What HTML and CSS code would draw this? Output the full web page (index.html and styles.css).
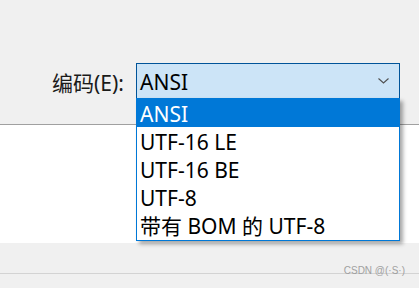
FILE: index.html
```html
<!DOCTYPE html>
<html>
	<head>
		<title>编码</title>
		<link rel="stylesheet" href="styles.css">
	</head>
	<body>
		<div class="panel">
			<div class="field">
				<label class="label">编码(E):</label>
				<div class="combo">
					<span class="combo-value">ANSI</span>
					<svg class="chevron" width="11" height="6" viewBox="0 0 11 6">
						<polyline points="0.5,0.5 5.5,5 10.5,0.5" fill="none" stroke="#505050" stroke-width="1.1"/>
					</svg>
				</div>
			</div>
		</div>
		<div class="content"></div>
		<div class="footer">
			<div class="footer-line"></div>
		</div>

		<ul class="list">
			<li class="selected">ANSI</li>
			<li>UTF-16 LE</li>
			<li>UTF-16 BE</li>
			<li>UTF-8</li>
			<li>带有 BOM 的 UTF-8</li>
		</ul>

		<div class="mark">CSDN @(·S·)</div>
	</body>
</html>
```

FILE: styles.css
```css
* {
	margin: 0; padding: 0;
	box-sizing: border-box;
}

body {
	width: 419px;
	height: 288px;
	overflow: hidden;
	position: relative;
	font-family: "Noto Sans", "Noto Sans CJK SC", sans-serif;
	font-size: 21px;
	color: #000;
	background: #fff;
}

.panel {
	height: 125px;
	background: #f0f0f0;
	border-bottom: 1px solid #a0a0a0;
	padding-top: 63px;
}

.field {
	display: flex;
	align-items: center;
	padding-left: 52px;
}

.label {
	width: 84px;
	font-family: "Noto Sans", "Noto Sans CJK SC", sans-serif;
	color: #1a1a1a;
	padding-top: 1px;
}

.combo {
	width: 264px;
	height: 36px;
	background: #cce4f7;
	border: 1px solid #005499;
	display: flex;
	align-items: center;
	justify-content: space-between;
	padding: 1px 10px 0 3px;
}

.chevron {
	display: block;
	margin-top: -1px;
}

.content {
	height: 118px;
	background: #fff;
}

.footer {
	height: 45px;
	background: #f0f0f0;
	padding-top: 30px;
}

.footer-line {
	border-top: 1px solid #d3d3d3;
}

.list {
	list-style: none;
	position: absolute;
	left: 136px;
	top: 98px;
	width: 264px;
	height: 143px;
	background: #fff;
	border: 1px solid #0078d7;
	box-shadow: 3px 3px 4px rgba(0, 0, 0, 0.35);
}

.list li {
	height: 28px;
	line-height: 28px;
	padding: 1px 0 0 3px;
	white-space: nowrap;
}

.list li.selected {
	background: #0078d7;
	color: #fff;
}

.mark {
	position: absolute;
	right: 14px;
	top: 265px;
	font-family: "Liberation Sans", sans-serif;
	font-size: 10px;
	color: #a0a0a0;
}
```
